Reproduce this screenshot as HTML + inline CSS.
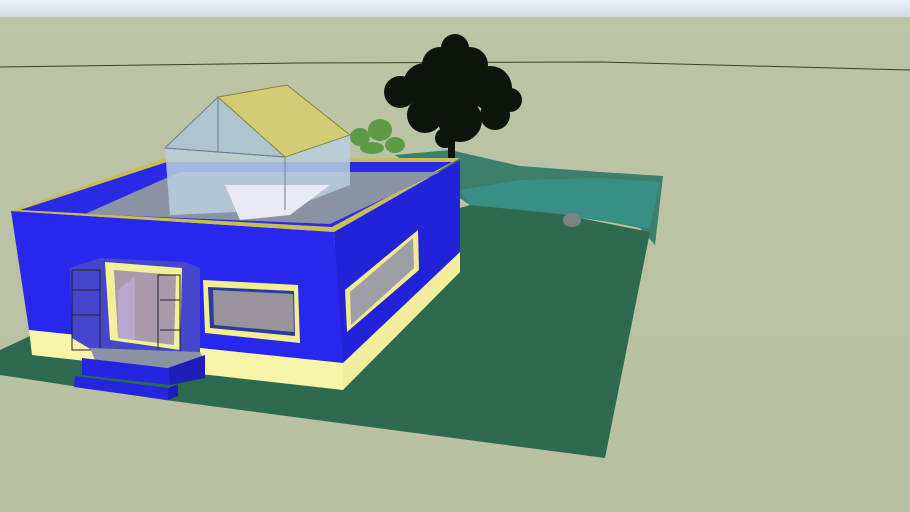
<!DOCTYPE html>
<html><head><meta charset="utf-8"><style>
html,body{margin:0;padding:0;width:910px;height:512px;overflow:hidden;background:#b9c2a2}
</style></head><body>
<svg width="910" height="512" viewBox="0 0 910 512" xmlns="http://www.w3.org/2000/svg">
<defs>
<linearGradient id="top" x1="0" y1="0" x2="0" y2="1"><stop offset="0" stop-color="#eef1f6"/><stop offset="1" stop-color="#d5dbe6"/></linearGradient>
<linearGradient id="sky" x1="0" y1="0" x2="0" y2="1"><stop offset="0" stop-color="#bcc5a6"/><stop offset="1" stop-color="#b7c0a0"/></linearGradient>
</defs>
<rect width="910" height="512" fill="url(#sky)"/>
<rect width="910" height="17" fill="url(#top)"/>
<path d="M0 67 L300 63 L600 62 L910 70" stroke="#3a4030" stroke-width="1" fill="none"/>
<!-- hill -->
<polygon points="395,155 450,150 520,166 600,172 663,176 655,245 640,228 560,212 470,205" fill="#3b7f6c"/>
<polygon points="460,190 520,180 600,178 660,182 650,228 560,215 470,205" fill="#3a8f84"/>
<!-- ground -->
<polygon points="0,350 30,336 470,205 560,214 650,232 605,458 165,400 0,375" fill="#2e6a50"/>
<!-- palms -->
<g fill="#5e9a48"><ellipse cx="360" cy="137" rx="10" ry="9"/><ellipse cx="380" cy="130" rx="12" ry="11"/><ellipse cx="395" cy="145" rx="10" ry="8"/><ellipse cx="372" cy="148" rx="12" ry="6"/></g>
<!-- tree -->
<g fill="#0d140c">
<rect x="448" y="140" width="7" height="20"/>
<circle cx="455" cy="48" r="14"/><circle cx="440" cy="65" r="18"/><circle cx="470" cy="65" r="18"/>
<circle cx="400" cy="92" r="16"/><circle cx="425" cy="85" r="22"/><circle cx="455" cy="90" r="28"/><circle cx="490" cy="88" r="22"/><circle cx="510" cy="100" r="12"/>
<circle cx="425" cy="115" r="18"/><circle cx="460" cy="120" r="22"/><circle cx="495" cy="115" r="15"/><circle cx="445" cy="138" r="10"/>
</g>
<ellipse cx="572" cy="220" rx="9" ry="7" fill="#7c8483"/>
<!-- house right wall -->
<polygon points="334,232 460,160 460,252 343,363" fill="#2222d8"/>
<polygon points="343,363 460,252 460,272 343,390" fill="#f2ee9e"/>
<!-- front wall -->
<polygon points="11,211 334,232 343,363 29,330" fill="#2727ee"/>
<polygon points="29,330 343,363 343,390 32,355" fill="#f8f4a8"/>
<!-- roof -->
<polygon points="11,211 165,158 460,158 334,232" fill="#c8be52"/>
<polygon points="20,210 167,162 452,162 332,227" fill="#2a2ae6"/>
<polygon points="85,214 180,172 440,172 330,224" fill="#8a93a3"/>
<!-- glass house -->
<polygon points="165,148 285,157 350,135 350,185 285,210 170,215" fill="#b8cfe0" opacity="0.85"/>
<polygon points="225,185 330,185 290,215 240,220" fill="#e8eaf5"/>
<polygon points="165,148 218,97 285,157" fill="#aec4cf" stroke="#6f8090" stroke-width="1"/>
<path d="M165,148 L285,157 L285,210 M218,97 L218,152" stroke="#6f8090" stroke-width="1" fill="none"/>
<polygon points="218,97 287,85 350,135 285,157" fill="#d2cd72" stroke="#8a8640" stroke-width="1"/>
<!-- front window -->
<polygon points="203,280 298,285 300,343 205,333" fill="#f3ee95"/>
<polygon points="208,287 294,291 295,336 210,328" fill="#2b3b9c"/>
<polygon points="213,290 293,294 294,332 214,325" fill="#9a939d"/>
<!-- side window -->
<polygon points="345,290 418,230 419,270 347,332" fill="#f0ea90"/>
<polygon points="350,292 413,238 414,268 351,325" fill="#9e9fa6"/>
<!-- door area -->
<polygon points="70,268 100,258 185,262 200,268 200,355 170,362 95,352 72,338" fill="#4546cc"/>
<polygon points="105,262 182,268 180,350 110,340" fill="#f4f09a"/>
<polygon points="114,270 176,275 174,345 118,338" fill="#a79aaa"/>
<polygon points="118,290 135,276 135,340 118,338" fill="#b9a6cc"/>
<g stroke="#222" stroke-width="1" fill="none">
<rect x="72" y="270" width="28" height="80"/><rect x="158" y="275" width="22" height="80"/>
<path d="M72 290 H100 M72 315 H100 M160 300 H180 M160 330 H180"/>
</g>
<polygon points="90,348 200,352 205,362 168,368 95,360" fill="#8a93a3"/>
<polygon points="82,358 168,368 170,385 82,375" fill="#2525e0"/>
<polygon points="168,368 205,355 205,378 170,385" fill="#1d1db8"/>
<polygon points="75,376 168,388 168,400 74,387" fill="#2525e0"/>
<polygon points="168,388 178,384 178,396 168,400" fill="#1d1db8"/>
</svg>
</body></html>
